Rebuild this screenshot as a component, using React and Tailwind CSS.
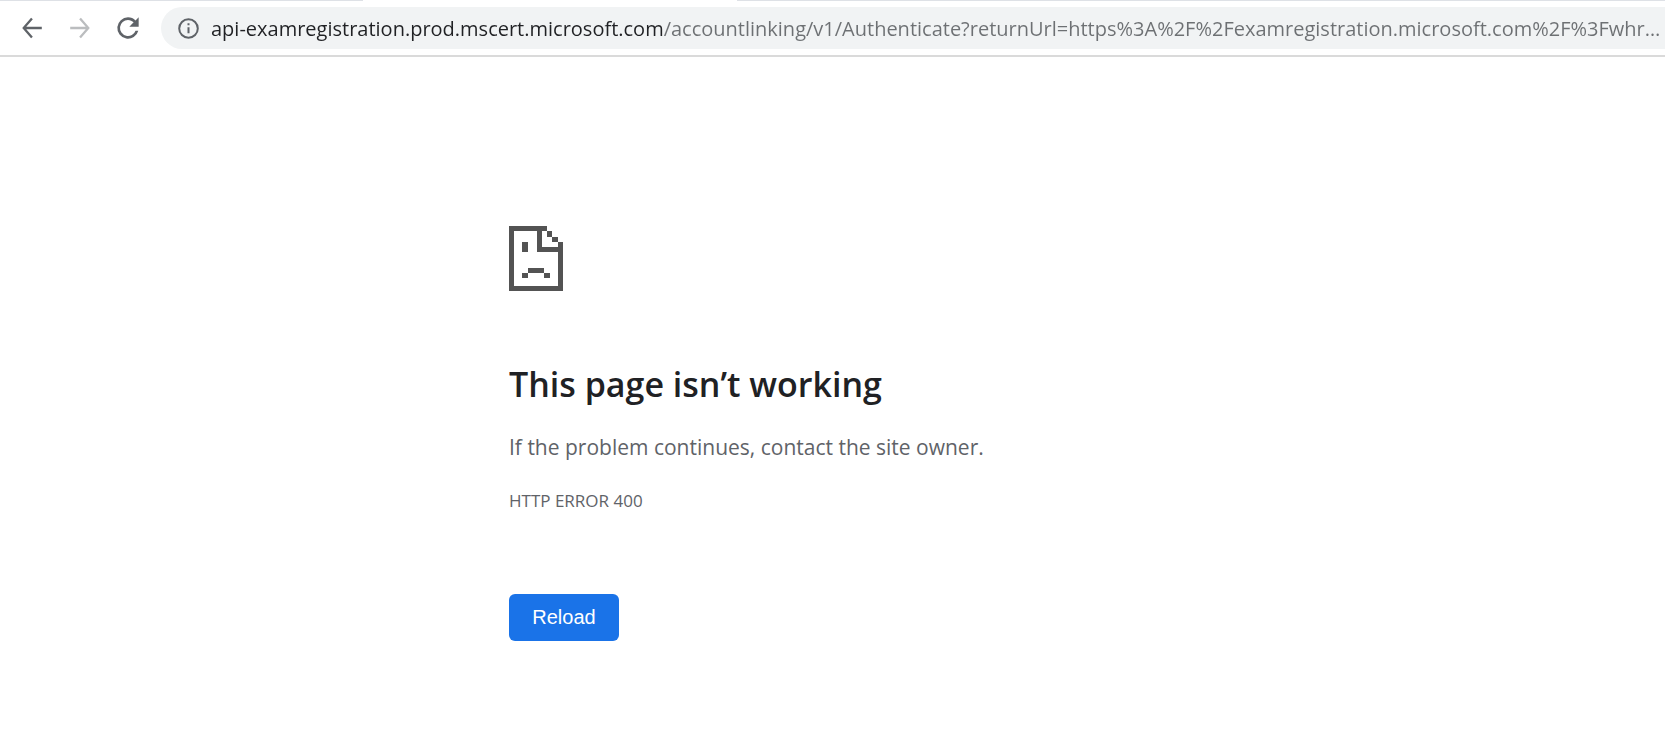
import React from "react";

const URL_TEXT =
  "api-examregistration.prod.mscert.microsoft.com/accountlinking/v1/Authenticate?returnUrl=https%3A%2F%2Fexamregistration.microsoft.com%2F%3Fwhr…";

function ArrowIcon({ className = "" }) {
  return (
    <svg viewBox="0 0 24 24" className={`size-7 ${className}`} fill="currentColor" aria-hidden="true">
      <path d="M20.4 11H7.1l5.6-6.4-1.5-1.3L3.6 12l7.6 8.7 1.5-1.3L7.1 13h13.3z" />
    </svg>
  );
}

function ReloadIcon() {
  return (
    <svg viewBox="0 0 24 24" className="size-8" fill="currentColor" aria-hidden="true">
      <path d="M17.65 6.35A7.96 7.96 0 0 0 12 4a8 8 0 1 0 7.73 10h-2.08A6 6 0 1 1 12 6c1.66 0 3.14.69 4.22 1.78L13 11h7V4z" />
    </svg>
  );
}

function InfoIcon() {
  return (
    <svg viewBox="0 0 21 21" className="size-[21px] text-[#5f6368]" aria-hidden="true">
      <circle cx="10.5" cy="10.5" r="9.3" fill="none" stroke="currentColor" strokeWidth="2" />
      <path d="M9.5 5.3h2v2h-2zM9.5 9.3h2v6h-2z" fill="currentColor" />
    </svg>
  );
}

function SadPageIcon() {
  return (
    <svg
      viewBox="0 0 162 196"
      className="h-[65px] w-[54px] text-[#535353]"
      fill="currentColor"
      shapeRendering="crispEdges"
      aria-hidden="true"
    >
      <path d="M0 0H114V16H100V64H146V48H162V196H0zM16 16V180H146V79H84V16z" fillRule="evenodd" />
      <path d="M114 16h16v16h-16zM130 32h16v16h-16zM40 48h16v31H40zM56 127h49v15H56zM40 142h16v16H40zM105 142h17v16h-17z" />
    </svg>
  );
}

export default function App() {
  return (
    <div className="min-h-screen bg-white font-['Open_Sans','Noto_Sans',sans-serif] text-[#5f6368]">
      <div className="flex h-px" aria-hidden="true">
        <div className="w-[363px] bg-[#dee1e6]" />
        <div className="w-[374px]" />
        <div className="flex-1 bg-[#dee1e6]" />
      </div>
      <header className="flex items-center border-b-2 border-[#dadada] py-[6px] pl-[18px]">
        <nav className="flex items-center gap-5" aria-label="History">
          <button type="button" aria-label="Back" className="flex size-7 items-center justify-center">
            <ArrowIcon />
          </button>
          <button
            type="button"
            aria-label="Forward"
            disabled
            className="flex size-7 items-center justify-center text-[#bbbdbf]"
          >
            <ArrowIcon className="rotate-180" />
          </button>
          <button type="button" aria-label="Reload this page" className="-mx-0.5 flex size-8 items-center justify-center">
            <ReloadIcon />
          </button>
        </nav>
        <form className="ml-[19px] flex h-[42px] min-w-0 flex-1 items-center gap-3 rounded-l-full bg-[#f1f3f4] pl-[17px]">
          <label htmlFor="address" className="shrink-0">
            <InfoIcon />
          </label>
          <input
            id="address"
            type="text"
            aria-label="Address"
            defaultValue={URL_TEXT}
            spellCheck={false}
            className="h-[42px] min-w-0 flex-1 bg-[linear-gradient(90deg,#202124_453px,#6d7073_453px)] bg-clip-text text-xl text-[#6d7073] outline-none [-webkit-text-fill-color:transparent]"
          />
        </form>
      </header>
      <main className="ml-[509px] mt-[169px] max-w-[646px]">
        <SadPageIcon />
        <h1 className="mt-[70px] text-[34px] leading-[46px] font-semibold text-[#202124]">This page isn’t working</h1>
        <p className="mt-6 text-[21px] leading-8">If the problem continues, contact the site owner.</p>
        <p className="mt-[26px] text-[17px] leading-6">HTTP ERROR 400</p>
        <button
          type="button"
          className="mt-[81px] h-[47px] w-[110px] rounded-[6px] bg-[#1a73e8] pb-0.5 font-['Liberation_Sans',Arial,sans-serif] text-xl text-white"
        >
          Reload
        </button>
      </main>
    </div>
  );
}
